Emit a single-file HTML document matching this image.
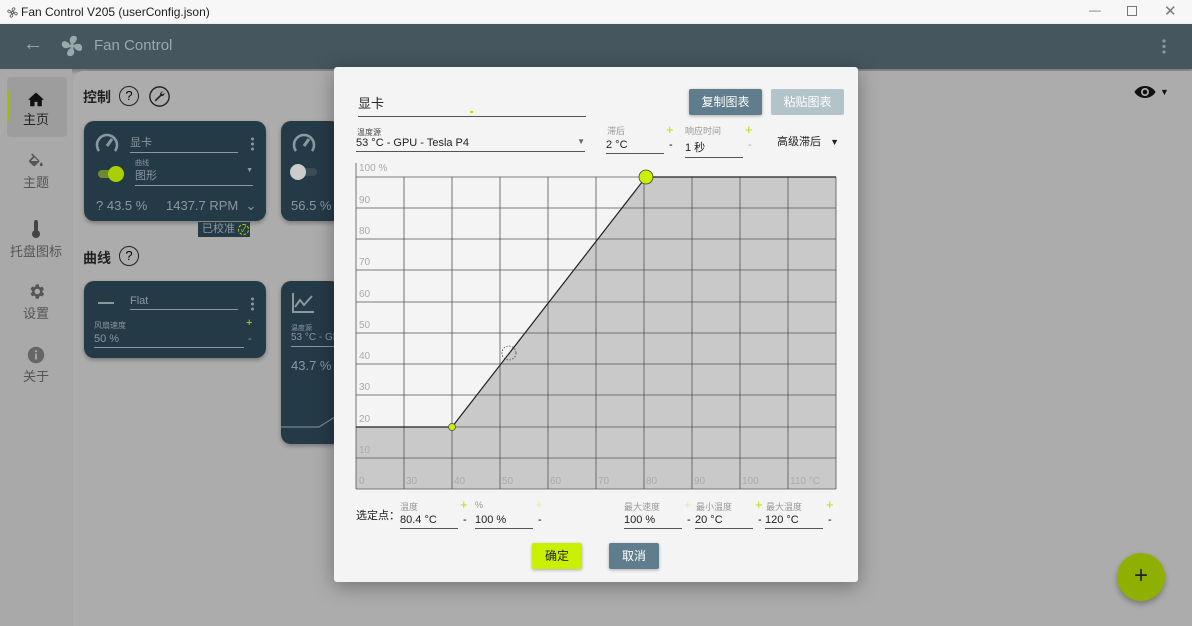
<!DOCTYPE html>
<html><head><meta charset="utf-8"><style>
*{box-sizing:border-box;margin:0;padding:0}
body{width:1192px;height:626px;overflow:hidden;background:#a6a6a6;font-family:"Liberation Sans","Noto Sans CJK SC",sans-serif;position:relative}
.abs{position:absolute}
.tb{left:0;top:0;width:1192px;height:24px;background:#f7f7f7;font-size:12px;color:#222}
.hdr{left:0;top:24px;width:1192px;height:45px;background:#45565e;box-shadow:0 2px 4px rgba(0,0,0,.3)}
.side{left:0;top:69px;width:72px;height:557px;background:#a9a9a9}
.main{left:73px;top:71px;width:1119px;height:555px;background:#acacac;border-top-left-radius:10px}
.nav{width:72px;text-align:center;font-size:13px;color:#555}
.nav svg{display:block;margin:0 auto 2px}
.card{background:#253a47;border-radius:10px;box-shadow:0 2px 4px rgba(0,0,0,.3);color:#8a98a0}
.dlg{left:334px;top:67px;width:524px;height:515px;background:#f4f4f4;border-radius:3px;box-shadow:0 4px 20px rgba(0,0,0,.35)}
.lbl{font-size:9px;color:#999}
.val{font-size:11px;color:#222;border-bottom:1px solid #555;padding-bottom:2px}
.pl{color:#b8e000;font-size:13px}
.btn{border-radius:2px;color:#fff;font-size:12px;text-align:center;box-shadow:0 1px 3px rgba(0,0,0,.3)}
</style></head><body>
<div class="abs tb"><svg class="abs" style="left:6px;top:6px" width="13" height="13" viewBox="0 0 24 24" fill="none" stroke="#555" stroke-width="1.5"><circle cx="12" cy="12" r="2"/><path d="M12 10C10 4 14 2 16 4S14 9 12 10M14 12c6-2 8 2 6 4s-5-2-6-4M12 14c2 6-2 8-4 6s2-5 4-6M10 12c-6 2-8-2-6-4s5 2 6 4"/></svg><span class="abs" style="left:21px;top:5px">Fan Control V205 (userConfig.json)</span>
<span class="abs" style="left:1089px;top:3px;color:#777">—</span><span class="abs" style="left:1127px;top:6px;width:10px;height:10px;border:1px solid #777"></span><span class="abs" style="left:1164px;top:2px;font-size:15px;color:#777">✕</span></div>
<div class="abs hdr"><span class="abs" style="left:23px;top:9px;font-size:20px;color:#9aa7ad">←</span>
<svg class="abs" style="left:60px;top:10px" width="24" height="24" viewBox="0 0 24 24" fill="#9aa7ad"><circle cx="12" cy="12" r="2.2"/><path d="M11 10C8 5 11 1 15 2s1 7-2 8zM14 11c5-3 9 0 8 4s-7 1-8-2zM13 14c3 5 0 9-4 8s-1-7 2-8zM10 13c-5 3-9 0-8-4s7-1 8 2z"/></svg>
<span class="abs" style="left:94px;top:13px;font-size:15px;color:#9aa7ad">Fan Control</span>
<svg class="abs" style="left:1161px;top:15px" width="6" height="16"><circle cx="3" cy="2" r="1.6" fill="#8a98a0"/><circle cx="3" cy="7.5" r="1.6" fill="#8a98a0"/><circle cx="3" cy="13" r="1.6" fill="#8a98a0"/></svg></div>
<div class="abs side">
<div class="abs" style="left:7px;top:8px;width:60px;height:60px;background:#9d9d9d;border-radius:4px"></div>
<div class="abs" style="left:7px;top:22px;width:3px;height:30px;background:#9ac000"></div>
<div class="abs nav" style="left:0;top:22px;color:#222"><svg width="18" height="16" viewBox="0 0 24 22"><path d="M12 2L1 12h3v9h6v-6h4v6h6v-9h3z" fill="#111"/></svg>主页</div>
<div class="abs nav" style="left:0;top:83px"><svg width="18" height="18" viewBox="0 0 24 24" fill="#555"><path d="M7 2l-1.4 1.4 2.4 2.4L3 11c-.6.6-.6 1.5 0 2.1l5.5 5.5c.6.6 1.5.6 2.1 0l5.5-5.5c.6-.6.6-1.5 0-2.1zM5.2 12L10 7.2l4.8 4.8zM19 13.5s-2 2.2-2 3.5a2 2 0 004 0c0-1.3-2-3.5-2-3.5z"/></svg>主题</div>
<div class="abs nav" style="left:0;top:150px"><svg width="12" height="20" viewBox="0 0 12 20" fill="#444"><rect x="4" y="1" width="4" height="12" rx="2"/><circle cx="6" cy="15" r="4"/></svg>托盘图标</div>
<div class="abs nav" style="left:0;top:213px"><svg width="19" height="19" viewBox="0 0 24 24" fill="#555"><path d="M19.4 13a7.5 7.5 0 000-2l2.1-1.6-2-3.5-2.5 1a7 7 0 00-1.7-1L15 3h-4l-.4 2.7a7 7 0 00-1.7 1l-2.5-1-2 3.5L6.5 11a7.5 7.5 0 000 2l-2.1 1.6 2 3.5 2.5-1a7 7 0 001.7 1L11 21h4l.4-2.7a7 7 0 001.7-1l2.5 1 2-3.5zM13 15.5a3.5 3.5 0 110-7 3.5 3.5 0 010 7z"/></svg>设置</div>
<div class="abs nav" style="left:0;top:277px"><svg width="18" height="18" viewBox="0 0 24 24"><circle cx="12" cy="12" r="11" fill="#666"/><rect x="10.8" y="10" width="2.4" height="8" fill="#aaa"/><circle cx="12" cy="7" r="1.5" fill="#aaa"/></svg>关于</div>
</div>
<div class="abs main"></div>
<div class="abs" style="left:83px;top:87px;font-size:14px;color:#222;font-weight:bold">控制</div>
<div class="abs" style="left:119px;top:86px;width:20px;height:20px;border:1.5px solid #222;border-radius:50%;text-align:center;font-size:13px;line-height:17px">?</div>
<svg class="abs" style="left:149px;top:86px" width="21" height="21" viewBox="0 0 24 24"><circle cx="12" cy="12" r="11" fill="none" stroke="#222" stroke-width="1.6"/><path d="M16.5 6.5a3 3 0 00-3.8 3.6L6.5 16.3l1.3 1.3 6.2-6.2a3 3 0 003.6-3.8l-1.8 1.8-1.4-.3-.3-1.4z" fill="#222"/></svg>
<div class="abs card" style="left:84px;top:121px;width:182px;height:100px">
<svg class="abs" style="left:10px;top:11px" width="26" height="22" viewBox="0 0 26 22" fill="none" stroke="#8a98a0" stroke-width="2.6"><path d="M5 19A10 10 0 1121 19"/><path d="M13 14l5-7" stroke-width="3"/></svg>
<div class="abs" style="left:46px;top:13px;width:108px;font-size:11px;border-bottom:1px solid #8a98a0;padding-bottom:2px">显卡</div>
<svg class="abs" style="left:166px;top:16px" width="5" height="14"><circle cx="2.5" cy="2" r="1.5" fill="#8a98a0"/><circle cx="2.5" cy="7" r="1.5" fill="#8a98a0"/><circle cx="2.5" cy="12" r="1.5" fill="#8a98a0"/></svg>
<div class="abs" style="left:14px;top:49px;width:22px;height:8px;border-radius:4px;background:#6d8a30"></div><div class="abs" style="left:24px;top:45px;width:16px;height:16px;border-radius:50%;background:#a8d000"></div>
<div class="abs" style="left:51px;top:37px;font-size:7px">曲线</div>
<div class="abs" style="left:51px;top:46px;width:118px;font-size:11px;border-bottom:1px solid #8a98a0;padding-bottom:2px">图形<span style="float:right;font-size:7px">▼</span></div>
<div class="abs" style="left:12px;top:77px;font-size:13px">? 43.5 %</div>
<div class="abs" style="left:82px;top:77px;font-size:13px">1437.7 RPM &nbsp;⌄</div>
</div>
<div class="abs" style="left:198px;top:222px;width:52px;height:15px;background:#253a47;color:#8a98a0;font-size:11px;padding-left:4px;line-height:15px">已校准 <span style="display:inline-block;width:11px;height:11px;border:1px dashed #a8d000;border-radius:50%;color:#a8d000;font-size:8px;line-height:9px;text-align:center;vertical-align:middle">✓</span></div>
<div class="abs card" style="left:281px;top:121px;width:60px;height:100px"><svg class="abs" style="left:10px;top:11px" width="26" height="22" viewBox="0 0 26 22" fill="none" stroke="#8a98a0" stroke-width="2.6"><path d="M5 19A10 10 0 1121 19"/><path d="M13 14l5-7" stroke-width="3"/></svg><div class="abs" style="left:10px;top:47px;width:26px;height:8px;border-radius:4px;background:#3a4e58"></div><div class="abs" style="left:9px;top:43px;width:16px;height:16px;border-radius:50%;background:#ccc"></div><div class="abs" style="left:10px;top:77px;font-size:13px">56.5 %</div></div>
<div class="abs" style="left:83px;top:248px;font-size:14px;color:#222;font-weight:bold">曲线</div>
<div class="abs" style="left:119px;top:246px;width:20px;height:20px;border:1.5px solid #222;border-radius:50%;text-align:center;font-size:13px;line-height:17px">?</div>
<div class="abs card" style="left:84px;top:281px;width:182px;height:77px">
<div class="abs" style="left:14px;top:21px;width:16px;height:2px;background:#8a98a0"></div>
<div class="abs" style="left:46px;top:14px;width:108px;font-size:11px;border-bottom:1px solid #8a98a0;padding-bottom:2px">Flat</div>
<svg class="abs" style="left:166px;top:16px" width="5" height="14"><circle cx="2.5" cy="2" r="1.5" fill="#8a98a0"/><circle cx="2.5" cy="7" r="1.5" fill="#8a98a0"/><circle cx="2.5" cy="12" r="1.5" fill="#8a98a0"/></svg>
<div class="abs" style="left:10px;top:39px;font-size:8px">风扇速度</div><div class="abs pl" style="left:162px;top:36px;font-size:11px">+</div>
<div class="abs" style="left:10px;top:52px;width:150px;font-size:11px;border-bottom:1px solid #8a98a0;padding-bottom:2px">50 %</div><div class="abs" style="left:164px;top:52px;font-size:11px">-</div>
</div>
<div class="abs card" style="left:281px;top:281px;width:60px;height:163px"><svg class="abs" style="left:10px;top:11px" width="24" height="22" viewBox="0 0 24 22" fill="none" stroke="#8a98a0" stroke-width="2"><path d="M2 1v19h21M4 15l5-7 4 5 8-9"/></svg><div class="abs" style="left:10px;top:42px;font-size:7px">温度源</div><div class="abs" style="left:10px;top:51px;font-size:10px">53 °C - GP</div><div class="abs" style="left:0;top:65px;width:60px;height:1px;background:#8a98a0;margin-left:10px"></div><div class="abs" style="left:10px;top:77px;font-size:13px">43.7 %</div><svg class="abs" style="left:0;top:130px" width="60" height="20"><polyline points="0,16 38,16 60,2" fill="none" stroke="#8a98a0"/></svg></div>
<svg class="abs" style="left:1134px;top:85px" width="22" height="14" viewBox="0 0 22 14"><path d="M11 1C6 1 2 4 0.5 7 2 10 6 13 11 13s9-3 10.5-6C20 4 16 1 11 1z" fill="#111"/><circle cx="11" cy="7" r="4" fill="#acacac"/><circle cx="11" cy="7" r="2.3" fill="#111"/></svg>
<div class="abs" style="left:1160px;top:87px;font-size:9px;color:#111">▼</div>
<div class="abs" style="left:1117px;top:553px;width:48px;height:48px;border-radius:50%;background:#8fb000;box-shadow:0 3px 6px rgba(0,0,0,.3);text-align:center;line-height:46px;font-size:24px;color:#222">+</div>

<div class="abs dlg">
<div class="abs" style="left:24px;top:26px;width:228px;font-size:13px;color:#222;border-bottom:1px solid #555;padding-bottom:4px">显卡</div>
<div class="abs" style="left:136px;top:44px;width:3px;height:2px;background:#b8e000"></div>
<div class="abs btn" style="left:355px;top:22px;width:73px;height:26px;background:#5f7d8c;line-height:26px">复制图表</div>
<div class="abs btn" style="left:437px;top:22px;width:73px;height:26px;background:#b3c3ca;line-height:26px;box-shadow:none">粘贴图表</div>
<div class="abs lbl" style="left:23px;top:60px;font-size:8px;color:#444">温度源</div>
<div class="abs val" style="left:22px;top:70px;width:229px">53 °C - GPU - Tesla P4<span style="float:right;font-size:8px;color:#666">▼</span></div>
<div class="abs lbl" style="left:273px;top:57px">滞后</div><div class="abs pl" style="left:332px;top:55px">+</div>
<div class="abs val" style="left:272px;top:72px;width:58px">2 °C</div><div class="abs" style="left:335px;top:72px;font-size:11px">-</div>
<div class="abs lbl" style="left:351px;top:57px">响应时间</div><div class="abs pl" style="left:411px;top:55px">+</div>
<div class="abs val" style="left:351px;top:72px;width:58px">1 秒</div><div class="abs" style="left:414px;top:72px;font-size:11px;color:#aaa">-</div>
<div class="abs" style="left:443px;top:66px;font-size:11px;color:#222">高级滞后 &nbsp;&nbsp;<span style="font-size:9px">▼</span></div>
<svg class="abs" style="left:0;top:0" width="524" height="430">
<polygon points="22,110 502,110 502,422 22,422" fill="#f4f4f4"/>
<polygon points="22,360 118,360 312,110 502,110 502,422 22,422" fill="#c9c9c9"/>
<g stroke="#555" stroke-width="0.8">
<line x1="22" y1="96" x2="22" y2="422"/>
<line x1="22" y1="422" x2="502" y2="422"/>
<line x1="502" y1="110" x2="502" y2="422"/>
<line x1="22" y1="110" x2="502" y2="110"/>
<line x1="22" y1="141" x2="502" y2="141"/><line x1="22" y1="172" x2="502" y2="172"/><line x1="22" y1="203" x2="502" y2="203"/><line x1="22" y1="235" x2="502" y2="235"/><line x1="22" y1="266" x2="502" y2="266"/><line x1="22" y1="297" x2="502" y2="297"/><line x1="22" y1="328" x2="502" y2="328"/><line x1="22" y1="360" x2="502" y2="360"/><line x1="22" y1="391" x2="502" y2="391"/>
<line x1="70" y1="110" x2="70" y2="422"/><line x1="118" y1="110" x2="118" y2="422"/><line x1="166" y1="110" x2="166" y2="422"/><line x1="214" y1="110" x2="214" y2="422"/><line x1="262" y1="110" x2="262" y2="422"/><line x1="310" y1="110" x2="310" y2="422"/><line x1="358" y1="110" x2="358" y2="422"/><line x1="406" y1="110" x2="406" y2="422"/><line x1="454" y1="110" x2="454" y2="422"/>
</g>
<g font-family="Liberation Sans" font-size="10" fill="#aaa">
<text x="25" y="104">100 %</text><text x="25" y="136">90</text><text x="25" y="167">80</text><text x="25" y="198">70</text><text x="25" y="230">60</text><text x="25" y="261">50</text><text x="25" y="292">40</text><text x="25" y="323">30</text><text x="25" y="355">20</text><text x="25" y="386">10</text><text x="25" y="417">0</text>
<text x="72" y="417">30</text><text x="120" y="417">40</text><text x="168" y="417">50</text><text x="216" y="417">60</text><text x="264" y="417">70</text><text x="312" y="417">80</text><text x="360" y="417">90</text><text x="408" y="417">100</text><text x="456" y="417">110 °C</text>
</g>
<polyline points="22,360 118,360 312,110 502,110" fill="none" stroke="#222" stroke-width="1.2"/>
<circle cx="175" cy="286" r="7" fill="none" stroke="#444" stroke-dasharray="1.5,1.5" stroke-width="0.8"/>
<circle cx="118" cy="360" r="3.5" fill="#c8f000" stroke="#444" stroke-width="0.7"/>
<circle cx="312" cy="110" r="7" fill="#c8f000" stroke="#444" stroke-width="0.8"/>
</svg>
<div class="abs" style="left:22px;top:440px;font-size:11px;color:#222">选定点：</div>
<div class="abs lbl" style="left:66px;top:433px">温度</div><div class="abs pl" style="left:126px;top:430px">+</div>
<div class="abs val" style="left:66px;top:447px;width:58px">80.4 °C</div><div class="abs" style="left:129px;top:447px;font-size:11px">-</div>
<div class="abs lbl" style="left:141px;top:433px">%</div><div class="abs pl" style="left:201px;top:430px;color:#e0f0a0">+</div>
<div class="abs val" style="left:141px;top:447px;width:58px">100 %</div><div class="abs" style="left:204px;top:447px;font-size:11px">-</div>
<div class="abs lbl" style="left:290px;top:433px">最大速度</div><div class="abs pl" style="left:350px;top:430px;color:#e0f0a0">+</div>
<div class="abs val" style="left:290px;top:447px;width:58px">100 %</div><div class="abs" style="left:353px;top:447px;font-size:11px">-</div>
<div class="abs lbl" style="left:362px;top:433px">最小温度</div><div class="abs pl" style="left:421px;top:430px">+</div>
<div class="abs val" style="left:361px;top:447px;width:58px">20 °C</div><div class="abs" style="left:424px;top:447px;font-size:11px">-</div>
<div class="abs lbl" style="left:432px;top:433px">最大温度</div><div class="abs pl" style="left:492px;top:430px">+</div>
<div class="abs val" style="left:431px;top:447px;width:58px">120 °C</div><div class="abs" style="left:494px;top:447px;font-size:11px">-</div>
<div class="abs btn" style="left:198px;top:476px;width:50px;height:26px;background:#c8f000;color:#222;line-height:26px">确定</div>
<div class="abs btn" style="left:275px;top:476px;width:50px;height:26px;background:#5f7d8c;line-height:26px">取消</div>
</div>
</body></html>
